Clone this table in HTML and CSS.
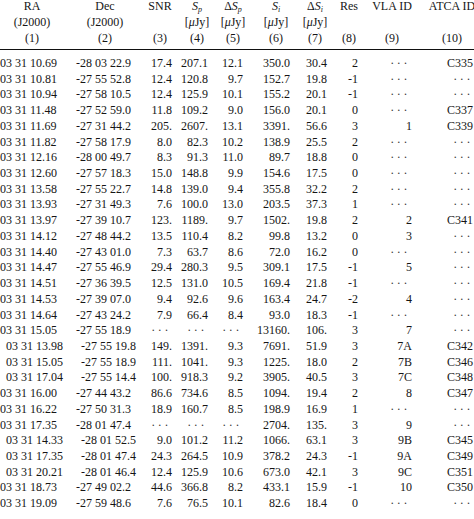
FILE: index.html
```html
<!DOCTYPE html>
<html>
<head>
<meta charset="utf-8">
<link rel="stylesheet" href="styles.css">
</head>
<body>
<div class="table">
  <div class="head">
    <span class="h">RA</span><span class="h">Dec</span><span class="h">SNR</span><span class="h"><i>S</i><sub><i>p</i></sub></span><span class="h">Δ<i>S</i><sub><i>p</i></sub></span><span class="h si"><i>S</i><sub><i>i</i></sub></span><span class="h">Δ<i>S</i><sub><i>i</i></sub></span><span class="h">Res</span><span class="h">VLA ID</span><span class="h">ATCA ID</span>
    <span class="h">(J2000)</span><span class="h">(J2000)</span><span class="h"></span><span class="h">[<i>μ</i>Jy]</span><span class="h">[<i>μ</i>Jy]</span><span class="h si">[<i>μ</i>Jy]</span><span class="h">[<i>μ</i>Jy]</span><span class="h"></span><span class="h"></span><span class="h"></span>
    <span class="h">(1)</span><span class="h">(2)</span><span class="h">(3)</span><span class="h">(4)</span><span class="h">(5)</span><span class="h si">(6)</span><span class="h">(7)</span><span class="h">(8)</span><span class="h">(9)</span><span class="h">(10)</span>
  </div>
  <div class="body" id="body"></div>
</div>
<script src="script.js"></script>
</body>
</html>
```

FILE: script.js
```js
const D = "\u00b7\u00b7\u00b7";
const rows = [
  [0,"03 31 10.69","-28 03 22.9","17.4","207.1","12.1","350.0","30.4","2",D,"C335"],
  [0,"03 31 10.81","-27 55 52.8","12.4","120.8","9.7","152.7","19.8","-1",D,D],
  [0,"03 31 10.94","-27 58 10.5","12.4","125.9","10.1","155.2","20.1","-1",D,D],
  [0,"03 31 11.48","-27 52 59.0","11.8","109.2","9.0","156.0","20.1","0",D,"C337"],
  [0,"03 31 11.69","-27 31 44.2","205.","2607.","13.1","3391.","56.6","3","1","C339"],
  [0,"03 31 11.82","-27 58 17.9","8.0","82.3","10.2","138.9","25.5","2",D,D],
  [0,"03 31 12.16","-28 00 49.7","8.3","91.3","11.0","89.7","18.8","0",D,D],
  [0,"03 31 12.60","-27 57 18.3","15.0","148.8","9.9","154.6","17.5","0",D,D],
  [0,"03 31 13.58","-27 55 22.7","14.8","139.0","9.4","355.8","32.2","2",D,D],
  [0,"03 31 13.93","-27 31 49.3","7.6","100.0","13.0","203.5","37.3","1",D,D],
  [0,"03 31 13.97","-27 39 10.7","123.","1189.","9.7","1502.","19.8","2","2","C341"],
  [0,"03 31 14.12","-27 48 44.2","13.5","110.4","8.2","99.8","13.2","0","3",D],
  [0,"03 31 14.40","-27 43 01.0","7.3","63.7","8.6","72.0","16.2","0",D,D],
  [0,"03 31 14.47","-27 55 46.9","29.4","280.3","9.5","309.1","17.5","-1","5",D],
  [0,"03 31 14.51","-27 36 39.5","12.5","131.0","10.5","169.4","21.8","-1",D,D],
  [0,"03 31 14.53","-27 39 07.0","9.4","92.6","9.6","163.4","24.7","-2","4",D],
  [0,"03 31 14.64","-27 43 24.2","7.9","66.4","8.4","93.0","18.3","-1",D,D],
  [0,"03 31 15.05","-27 55 18.9",D,D,D,"13160.","106.","3","7",D],
  [1,"03 31 13.98","-27 55 19.8","149.","1391.","9.3","7691.","51.9","3","7A","C342"],
  [1,"03 31 15.05","-27 55 18.9","111.","1041.","9.3","1225.","18.0","2","7B","C346"],
  [1,"03 31 17.04","-27 55 14.4","100.","918.3","9.2","3905.","40.5","3","7C","C348"],
  [0,"03 31 16.00","-27 44 43.2","86.6","734.6","8.5","1094.","19.4","2","8","C347"],
  [0,"03 31 16.22","-27 50 31.3","18.9","160.7","8.5","198.9","16.9","1",D,D],
  [0,"03 31 17.35","-28 01 47.4",D,D,D,"2704.","135.","3","9",D],
  [1,"03 31 14.33","-28 01 52.5","9.0","101.2","11.2","1066.","63.1","3","9B","C345"],
  [1,"03 31 17.35","-28 01 47.4","24.3","264.5","10.9","378.2","24.3","-1","9A","C349"],
  [1,"03 31 20.21","-28 01 46.4","12.4","125.9","10.6","673.0","42.1","3","9C","C351"],
  [0,"03 31 18.73","-27 49 02.2","44.6","366.8","8.2","433.1","15.9","-1","10","C350"],
  [0,"03 31 19.09","-27 59 48.6","7.6","76.5","10.1","82.6","18.4","0",D,D]
];
const body = document.getElementById("body");
for (const r of rows) {
  for (let i = 1; i <= 10; i++) {
    const s = document.createElement("span");
    s.className = "c c" + i + (r[0] && i <= 2 ? " in" : "");
    const v = r[i];
    if (v === D) {
      const d = document.createElement("span");
      d.className = "dots";
      d.textContent = D;
      s.appendChild(d);
    } else {
      s.textContent = v;
    }
    body.appendChild(s);
  }
}
```

FILE: styles.css
```css
html, body {
  margin: 0;
  padding: 0;
  overflow: hidden;
  background: #fff;
}
body {
  width: 474px;
  height: 519px;
  font-family: "Liberation Serif", "DejaVu Serif", serif;
  font-size: 12px;
  color: #151515;
}
.table {
  width: 486px;
  margin-top: -2px;
}
.head {
  display: grid;
  grid-template-columns: 64px 82px 28px 46px 26px 52px 34px 34px 52px 68px;
  grid-auto-rows: 16px;
  line-height: 16px;
  padding-bottom: 3px;
  border-bottom: 1.2px solid #111;
}
.h {
  text-align: center;
  white-space: nowrap;
}
.h.si {
  padding-left: 8px;
}
sub {
  font-size: 8px;
  vertical-align: -2px;
  line-height: 0;
}
.body {
  display: grid;
  grid-template-columns: 64px 82px 28px 46px 26px 52px 34px 34px 52px 68px;
  grid-auto-rows: 15.72px;
  line-height: 15.72px;
  padding-top: 6px;
}
.c {
  white-space: nowrap;
  text-align: right;
}
.c1 { text-align: left; padding-left: 0; }
.c2 { text-align: left; padding-left: 12px; }
.c1.in { padding-left: 6px; }
.c2.in { padding-left: 17px; }
.c3 { padding-right: 2px; }
.c4 { padding-right: 12px; }
.c5 { padding-right: 3px; }
.c6 { padding-right: 8px; }
.c7 { padding-right: 5px; }
.c8 { padding-right: 8px; }
.c9 { padding-right: 6px; }
.c10 { padding-right: 13px; }
.dots {
  letter-spacing: 2.6px;
  color: #333;
  display: inline-block;
  margin-right: 1px;
}
.c9 .dots { margin-right: 2px; }
.c10 .dots { margin-right: 0; }
```
